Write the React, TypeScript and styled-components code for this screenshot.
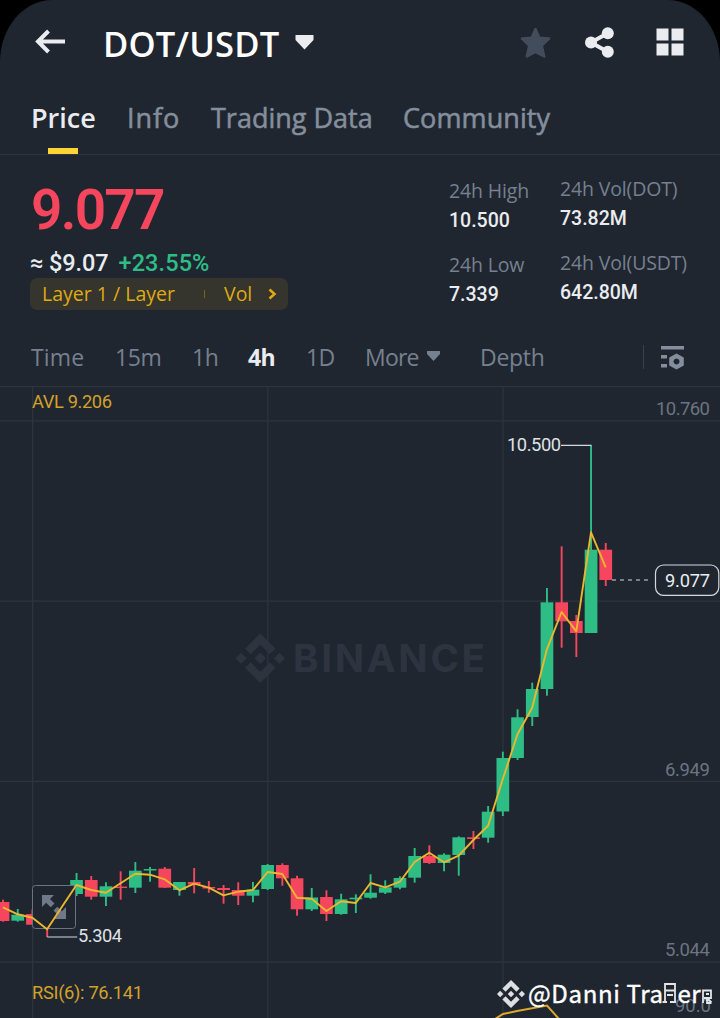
import React from "react";
import styled, { createGlobalStyle } from "styled-components";

const c = {
  bg: "#1f2630",
  line: "#2d343f",
  white: "#eaecef",
  grey: "#848e9c",
  dim: "#76808f",
  yellow: "#fcd535",
  gold: "#f0b90b",
  green: "#2ebd85",
  red: "#f6465d",
};
const sans = '"Open Sans", "Noto Sans", sans-serif';
const digits = 'Roboto, "Liberation Sans", sans-serif';

const GlobalStyle = createGlobalStyle`
  * { box-sizing: border-box; }
  body { margin: 0; background: #000; }
`;

const Screen = styled.main`
  width: 720px;
  height: 1018px;
  overflow: hidden;
  display: flex;
  flex-direction: column;
  background: ${c.bg};
  border-radius: 52px 52px 0 0 / 62px 62px 0 0;
  color: ${c.white};
  font-family: ${sans};
  white-space: nowrap;
`;

const Header = styled.header`
  height: 84px;
  padding: 0 36px 0 35px;
  display: flex;
  align-items: center;
  svg { display: block; flex: none; }
`;

const Title = styled.h1`
  margin: 3px 14px 0 37px;
  width: 178px;
  font-size: 34.5px;
  line-height: 46px;
  font-weight: 600;
  color: #fff;
  letter-spacing: 0.2px;
`;

const Actions = styled.div`
  margin-left: auto;
  display: flex;
  align-items: center;
`;

const ShareIcon = styled.svg`
  margin-left: 34px;
`;

const GridIcon = styled.svg`
  margin-left: 42px;
`;

const Tabs = styled.nav`
  height: 71px;
  padding-left: 31px;
  display: flex;
  border-bottom: 1px solid ${c.line};
`;

const Tab = styled.div<{ $width: number; $active?: boolean; $spacing?: number }>`
  width: ${(p) => p.$width}px;
  padding-top: 15px;
  font-size: 27px;
  line-height: 38px;
  font-weight: ${(p) => (p.$active ? 600 : 400)};
  -webkit-text-stroke: ${(p) => (p.$active ? "0" : "0.55px")} currentColor;
  color: ${(p) => (p.$active ? c.white : c.grey)};
  letter-spacing: ${(p) => p.$spacing ?? 0}px;
`;

const Indicator = styled.div`
  width: 30px;
  height: 6px;
  margin: 11px 0 0 17px;
  background: ${c.yellow};
`;

const Summary = styled.section`
  height: 175px;
  display: flex;
`;

const PriceBlock = styled.div`
  width: 449px;
  padding: 22px 0 0 30px;
`;

const LastPrice = styled.div`
  padding-left: 1px;
  height: 68px;
  font: 600 55px/66px ${digits};
  letter-spacing: -1.7px;
  color: ${c.red};
`;

const Change = styled.div`
  display: flex;
  gap: 10px;
  height: 33px;
  font: 500 23.5px/36px ${digits};
`;

const Approx = styled.span`
  letter-spacing: -0.1px;
`;

const Rise = styled.span`
  color: ${c.green};
  letter-spacing: 0.1px;
`;

const Tag = styled.div`
  width: 258px;
  height: 32px;
  padding: 0 11px 0 12px;
  display: flex;
  align-items: center;
  border-radius: 7px;
  background: #35342d;
  color: #dfaa14;
  font-size: 19.5px;
  line-height: 32px;
`;

const TagName = styled.span`
  width: 162px;
`;

const TagDivider = styled.i`
  width: 1px;
  height: 8px;
  margin-right: 19px;
  background: #7b651e;
`;

const Chevron = styled.svg`
  margin-left: auto;
`;

const Stats = styled.div<{ $top: number; $width: number }>`
  width: ${(p) => p.$width}px;
  padding-top: ${(p) => p.$top}px;
  display: flex;
  flex-direction: column;
  gap: 16px;
`;

const StatLabel = styled.div`
  font-size: 19.5px;
  line-height: 28px;
  letter-spacing: -0.15px;
  color: ${c.dim};
`;

const StatValue = styled.div`
  padding-top: 2px;
  font: 500 19.5px/28px ${digits};
  letter-spacing: 0;
`;

const Intervals = styled.nav`
  height: 56px;
  padding: 0 35px 2px 31px;
  display: flex;
  align-items: center;
  svg { display: block; }
`;

const Interval = styled.span<{ $width: number; $active?: boolean; $spacing?: number }>`
  width: ${(p) => p.$width}px;
  font-size: 23px;
  line-height: 32px;
  font-weight: ${(p) => (p.$active ? 700 : 400)};
  color: ${(p) => (p.$active ? c.white : c.dim)};
  letter-spacing: ${(p) => p.$spacing ?? 0}px;
`;

const MoreArrow = styled.svg`
  margin: 0 40px 3px 0;
`;

const Tools = styled.div`
  margin-left: auto;
  height: 24px;
  padding-left: 16px;
  border-left: 1px solid #3a414d;
`;

const Chart = styled.svg`
  display: block;
  flex: none;
  font-family: ${digits};
`;

type Candle = [number, number, number, number, "g" | "r", number];

// high, body top, body bottom, low, direction, average
const candles: Candle[] = [
  [899.7, 902, 921, 921.7, "r", 907.3],
  [909, 914.7, 920.7, 921.7, "g", 914.3],
  [909.5, 914, 924.7, 924.7, "r", 917.7],
  [920, 924.7, 928, 937, "r", 929.3],
  [892, 894, 926, 928, "g", 907],
  [873, 880, 894, 896, "g", 885],
  [876, 880, 896.7, 899.7, "r", 890],
  [882.3, 886.3, 896.7, 906, "g", 892.7],
  [871.3, 886.6, 888, 899.7, "r", 883.3],
  [862, 870.7, 887.7, 893, "g", 873.7],
  [867, 869, 870.5, 881.7, "g", 874.7],
  [867, 868.7, 887.7, 888, "r", 879.3],
  [882, 882, 890, 895.7, "g", 890.3],
  [868, 882, 884.5, 893.3, "r", 883.7],
  [881, 887, 888.5, 892.7, "r", 887.7],
  [885, 888, 890, 903.7, "r", 895.3],
  [882.3, 890, 895.7, 905, "r", 891.7],
  [882, 889.7, 895.7, 902.3, "g", 890],
  [864, 865, 889, 890, "g", 872],
  [863.3, 865, 878.3, 885.7, "r", 874],
  [875.7, 878.3, 909.3, 915.7, "r", 897.7],
  [888, 897.5, 909.3, 911, "g", 898.7],
  [890.3, 897, 914, 921, "r", 911],
  [893.7, 899.3, 914, 914.7, "g", 901.3],
  [894.3, 897.7, 899.3, 913, "g", 903],
  [874.3, 892.7, 897.7, 898.7, "g", 883],
  [880.3, 887.3, 892.7, 894, "g", 887.3],
  [876.3, 878, 887.7, 889.3, "g", 881.7],
  [848, 856, 877.7, 882.7, "g", 862],
  [845.3, 856, 863, 864, "r", 852.7],
  [853.3, 854.7, 863, 871.3, "g", 862.3],
  [836.3, 837.3, 855, 875.7, "g", 855.7],
  [831, 837.3, 839, 849, "r", 840],
  [806, 811.7, 837.7, 842.7, "g", 825.7],
  [751.7, 758, 811.5, 816, "g", 779],
  [709.3, 717.3, 758, 760, "g", 734.3],
  [682.7, 689, 717, 726, "g", 707.7],
  [588, 602.3, 689, 695.7, "g", 649.3],
  [546.3, 602.3, 621.3, 647.7, "r", 612],
  [615, 621, 633, 657, "r", 631.3],
  [445.3, 549.7, 633, 633, "g", 532.3],
  [543, 549.7, 580, 586, "r", 567.3],
];
const cx = (i: number) => 3 + i * 14.7;

const LogoMark = ({ x, y, size, fill }: { x: number; y: number; size: number; fill: string }) => (
  <g transform={`translate(${x} ${y}) scale(${size / 126.6})`} fill={fill}>
    <path d="M38.7 53.2 63.3 28.6l24.6 24.6 14.3-14.3L63.3 0 24.4 38.9zM0 63.3 14.3 49l14.3 14.3-14.3 14.3zM38.7 73.4 63.3 98l24.6-24.6 14.3 14.3-38.9 38.9-38.9-38.9zM98 63.3 112.3 49l14.3 14.3-14.3 14.3zM77.8 63.3 63.3 48.8 48.8 63.3l14.5 14.5z" />
  </g>
);

const PriceChart = () => (
  <Chart width="720" height="632" viewBox="0 386 720 632">
    <g stroke={c.line} strokeWidth="1.3">
      {[386.6, 420.8, 601.2, 781.4, 962].map((y) => (
        <line key={y} x1="0" x2="720" y1={y} y2={y} />
      ))}
      {[32.6, 267.8, 503].map((x) => (
        <line key={x} x1={x} x2={x} y1="387" y2="1018" />
      ))}
    </g>
    <LogoMark x={235.5} y={633.5} size={49.5} fill="#2e343f" />
    <text x="293" y="672" textLength="192" fontFamily="Inter, sans-serif" fontSize="38.5" fontWeight="700" fill="#2e343f">BINANCE</text>
    <g fontSize="18.5" fill="#6c7482" textAnchor="end">
      <text x="710" y="415" textLength="54">10.760</text>
      <text x="710" y="776" textLength="45">6.949</text>
      <text x="710" y="956" textLength="45">5.044</text>
      <text x="711" y="1012" textLength="36">90.0</text>
    </g>
    <g fontSize="18.3" fill="#d2a129">
      <text x="32" y="408" textLength="80">AVL 9.206</text>
      <text x="32" y="999" textLength="111">RSI(6): 76.141</text>
    </g>
    {candles.map(([h, t, b, l, dir], i) => (
      <g key={i} fill={dir === "g" ? c.green : c.red}>
        <rect x={cx(i) - 0.9} y={h} width="1.9" height={l - h} />
        <rect x={cx(i) - 6.3} y={t} width="12.7" height={b - t} />
      </g>
    ))}
    <rect x="32.5" y="885.5" width="43" height="43" rx="3" fill={c.bg} stroke="#6b7380" />
    <g fill="#6f7989">
      <path d="M42 895h12l-4 4 4.500 4.500-3.800 3.800-4.600-4.600L42 907z" />
      <path d="M66 919H54l4-4-4.500-4.500 3.800-3.800 4.600 4.600L66 907z" />
    </g>
    <polyline
      points={candles.map((k, i) => `${cx(i)},${k[5]}`).join(" ")}
      fill="none"
      stroke="#eab72d"
      strokeWidth="1.9"
      strokeLinejoin="round"
    />
    <g stroke="#d5d8dd" strokeWidth="1.2" fill="none">
      <path d="M561 445.3h30.5M47.2 937h30" />
      <path d="M612 580h38" strokeDasharray="4 4" />
    </g>
    <g fontSize="18.3" fill="#dfe2e7">
      <text x="507" y="451" textLength="54">10.500</text>
      <text x="78" y="942" textLength="44">5.304</text>
    </g>
    <rect x="655.5" y="565" width="63.3" height="30.3" rx="8" fill={c.bg} stroke="#d5d8dd" strokeWidth="1.2" />
    <text x="665" y="587" textLength="45" fontSize="18.3" fill="#eaecef">9.077</text>
    <path d="M495 1019l8-5 14-3 30-5.5 12 13.5" fill="none" stroke="#dca92d" strokeWidth="2" />
    <LogoMark x={497} y={980} size={28} fill="#dedfe1" />
    <g fill="#fff" stroke="#fff" strokeWidth="0.4" fontFamily={'"Noto Sans CJK SC", sans-serif'} fontSize="24">
      <text x="528" y="1003" textLength="135">@Danni Tra</text>
      <text x="677.5" y="1003" textLength="23">er</text>
    </g>
    <g fill="none" stroke="#e4e5e8" strokeWidth="1.8">
      <path d="M665 1002v-18h10v18M665 990.500h10M667 995h6M662.500 1002h4.500M670 1002h6" />
      <path d="M703 1003V990.500h8v7.500h-7M707 998v5h4.500M707 998l4.500 4.500M706 994h3" />
    </g>
  </Chart>
);

export default function App() {
  return (
    <>
      <GlobalStyle />
      <Screen>
        <Header>
          <svg width="31" height="26" viewBox="0 0 31 26" fill="none" stroke={c.white} strokeWidth="4">
            <path d="M3 12.5h27M13.5 2 3 12.5 13.5 23" />
          </svg>
          <Title>DOT/USDT</Title>
          <svg width="19" height="15" viewBox="0 0 19 15" fill={c.white}>
            <path d="M.5 0h18v5L9.5 14.5.5 5z" />
          </svg>
          <Actions>
            <svg width="31" height="31" viewBox="0 0 31 31" fill="#434c5b" stroke="#434c5b" strokeWidth="2.500" strokeLinejoin="round">
              <path d="M15.500 2l3.800 8.700 9.700.8-7.300 7 2.500 11-8.700-4.500-8.700 4.500 2.500-11-7.300-7 9.700-.8z" />
            </svg>
            <ShareIcon width="29" height="31" viewBox="0 0 29 31" fill={c.white}>
              <path d="M23 6 6 15.5 23 25" fill="none" stroke={c.white} strokeWidth="4" />
              <circle cx="6" cy="15.5" r="6" />
              <circle cx="22.8" cy="6.2" r="6" />
              <circle cx="22.8" cy="24.8" r="6" />
            </ShareIcon>
            <GridIcon width="28" height="28" viewBox="0 0 28 28" fill={c.white}>
              <path d="M.5.5h12v12H.5zM15.5.5h12v12h-12zM.5 15.5h12v12H.5zM15.5 15.5h12v12h-12z" />
            </GridIcon>
          </Actions>
        </Header>
        <Tabs>
          <Tab $width={96} $active>
            Price
            <Indicator />
          </Tab>
          <Tab $width={84} $spacing={0.9}>Info</Tab>
          <Tab $width={192}>Trading Data</Tab>
          <Tab $width={150} $spacing={0.1}>Community</Tab>
        </Tabs>
        <Summary>
          <PriceBlock>
            <LastPrice>9.077</LastPrice>
            <Change>
              <Approx>≈ $9.07</Approx>
              <Rise>+23.55%</Rise>
            </Change>
            <Tag>
              <TagName>Layer 1 / Layer</TagName>
              <TagDivider />
              <span>Vol</span>
              <Chevron width="9" height="12" viewBox="0 0 9 12" fill="none" stroke="#dfaa14" strokeWidth="2.5">
                <path d="M1.5 1.5 6.500 6l-5 4.500" />
              </Chevron>
            </Tag>
          </PriceBlock>
          <Stats $top={22} $width={111}>
            <div>
              <StatLabel>24h High</StatLabel>
              <StatValue>10.500</StatValue>
            </div>
            <div>
              <StatLabel>24h Low</StatLabel>
              <StatValue>7.339</StatValue>
            </div>
          </Stats>
          <Stats $top={20} $width={150}>
            <div>
              <StatLabel>24h Vol(DOT)</StatLabel>
              <StatValue>73.82M</StatValue>
            </div>
            <div>
              <StatLabel>24h Vol(USDT)</StatLabel>
              <StatValue>642.80M</StatValue>
            </div>
          </Stats>
        </Summary>
        <Intervals>
          <Interval $width={84} $spacing={0.2}>Time</Interval>
          <Interval $width={77} $spacing={-0.4}>15m</Interval>
          <Interval $width={56} $spacing={-0.4}>1h</Interval>
          <Interval $width={58} $active $spacing={-0.7}>4h</Interval>
          <Interval $width={59} $spacing={-0.7}>1D</Interval>
          <Interval $width={62} $spacing={-0.8}>More</Interval>
          <MoreArrow width="13" height="10" viewBox="0 0 13 10" fill="#76808f">
            <path d="M0 0h13v3L6.5 10 0 3z" />
          </MoreArrow>
          <Interval $width={66} $spacing={-0.3}>Depth</Interval>
          <Tools>
            <svg width="25" height="25" viewBox="0 0 25 25" fill="#848e9c">
              <path d="M1 1h23v3.5H1zM1 10h6v3.5H1zM1 19h6v3.5H1z" />
              <path fillRule="evenodd" d="M16.5 8.500l7.300 4v8l-7.300 4-7.300-4v-8zM16.500 13.500a3 3 0 1 0 .01 0z" />
            </svg>
          </Tools>
        </Intervals>
        <PriceChart />
      </Screen>
    </>
  );
}
